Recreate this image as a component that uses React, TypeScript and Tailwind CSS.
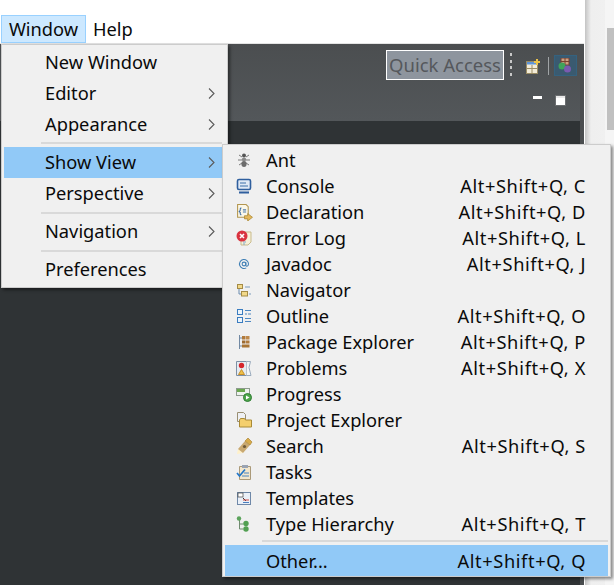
import React from 'react';

const AntIcon = () => (
  <svg width="16" height="16" viewBox="0 0 16 16" fill="none" stroke="#7a7a7a" strokeWidth="1">
    <path d="M3 3l3 2M13 3l-3 2M2 8h4M14 8h-4M3 13l3-2M13 13l-3-2" />
    <circle cx="8" cy="3.5" r="2" fill="#555" stroke="none" />
    <ellipse cx="8" cy="7.5" rx="2.2" ry="2" fill="#8a8a8a" stroke="none" />
    <ellipse cx="8" cy="12" rx="2.6" ry="3" fill="#6c6c6c" stroke="none" />
  </svg>
);

const ConsoleIcon = () => (
  <svg width="16" height="16" viewBox="0 0 16 16" fill="none">
    <rect x="1.5" y="1.5" width="13" height="10" rx="1.5" fill="#dfe9f5" stroke="#2f5f9e" strokeWidth="1.6" />
    <path d="M4 5h6M4 8h8" stroke="#3b6ea8" />
    <path d="M3 14.5h10" stroke="#2f5f9e" strokeWidth="2" />
  </svg>
);

const DeclarationIcon = () => (
  <svg width="17" height="17" viewBox="0 0 16 16" fill="none">
    <path d="M1.5 .5h8l2 2v10h-10z" fill="#fbf7e8" stroke="#b3964f" />
    <path d="M5 3.500L4 4.500V6L3 7l1 1v1.500l1 1" stroke="#3f6ea5" />
    <path d="M6.500 5.500h3M6.500 7.500h3" stroke="#4f7cab" />
    <path d="M8 11h3V9l4.500 3.500L11 16v-2H8z" fill="#e5b95c" stroke="#a9852f" strokeWidth=".7" />
  </svg>
);

const ErrorLogIcon = () => (
  <svg width="16" height="16" viewBox="0 0 16 16" fill="none">
    <path d="M5 2h10v10l-3 3H5z" fill="#f6f0d8" stroke="#c9bb8c" />
    <path d="M7 12h3M7 14h2" stroke="#7ea7c9" />
    <circle cx="6" cy="6" r="5.5" fill="#d9333f" />
    <path d="M4 4l4 4M8 4l-4 4" stroke="#fff" strokeWidth="1.6" />
  </svg>
);

const JavadocIcon = () => (
  <svg width="12" height="12" viewBox="0 0 16 16" fill="none" stroke="#3f7fb5">
    <circle cx="8" cy="8" r="2.500" strokeWidth="1.400" />
    <path d="M10.500 5.500v4q0 1.500 1.500 1.500 2-.5 2-3a6 6 0 1 0-3 5.200" strokeWidth="1.400" />
  </svg>
);

const NavigatorIcon = () => (
  <svg width="16" height="16" viewBox="0 0 16 16" fill="none">
    <rect x="1.500" y="2.500" width="5" height="4" fill="#f2d98a" stroke="#a48b46" />
    <path d="M3 7v5h2" stroke="#6d8db0" />
    <rect x="5.500" y="9.500" width="6" height="4.500" fill="#f2d98a" stroke="#a48b46" />
    <path d="M9 5h5M13 12h2" stroke="#7d9cbc" />
  </svg>
);

const OutlineIcon = () => (
  <svg width="16" height="16" viewBox="0 0 16 16" fill="none">
    <rect x="1.500" y="1.500" width="5" height="5" fill="#eaf3fb" stroke="#3a7cc0" />
    <rect x="1.500" y="9.500" width="5" height="5" fill="#eaf3fb" stroke="#3a7cc0" />
    <path d="M9 2.500h6M9 6h2M12 6h3M9 10.500h6M9 13.500h6" stroke="#4c87c2" />
  </svg>
);

const PackageIcon = () => (
  <svg width="16" height="16" viewBox="0 0 16 16" fill="none">
    <path d="M3.500 1v14M3.500 4h3M3.500 12h3" stroke="#7289a3" />
    <rect x="6" y="2" width="3.500" height="3.500" fill="#b07a3c" />
    <rect x="10" y="2" width="3.500" height="3.500" fill="#c08a4c" />
    <rect x="6" y="6.500" width="3.500" height="3" fill="#9c6a30" />
    <rect x="10" y="6.500" width="3.500" height="3" fill="#b07a3c" />
    <rect x="6" y="10.500" width="7.500" height="3" fill="#a87434" />
  </svg>
);

const ProblemsIcon = () => (
  <svg width="16" height="16" viewBox="0 0 16 16" fill="none">
    <path d="M.5 1.500h10v14H.5z" fill="#e6ecf2" stroke="#7d90a5" />
    <path d="M10.500 1.500h4l-1.500 6 2 8h-4.500" fill="#f2f5f8" stroke="#9aabbd" />
    <circle cx="5.500" cy="5.500" r="2.700" fill="#d5252d" />
    <path d="M5.500 9.500l3 5h-6z" fill="#eec14a" stroke="#c8902a" />
  </svg>
);

const ProgressIcon = () => (
  <svg width="16" height="16" viewBox="0 0 16 16" fill="none">
    <rect x=".5" y="2.500" width="13" height="7" fill="#eef2ee" stroke="#8d9a8d" />
    <rect x="1" y="3" width="8" height="3" fill="#6aa84f" />
    <circle cx="11.500" cy="11.500" r="4" fill="#4ea64a" stroke="#2f7d33" />
    <path d="M10 9.500l3.500 2-3.500 2z" fill="#fff" />
  </svg>
);

const ProjectIcon = () => (
  <svg width="16" height="16" viewBox="0 0 16 16" fill="none">
    <path d="M1.500 .5h6l2 2v7h-8z" fill="#eef0f4" stroke="#9a8f72" />
    <path d="M3.500 8v7h12V8h-6l-1-1.500h-4z" fill="#f4cf6d" stroke="#a98a36" />
  </svg>
);

const SearchIcon = () => (
  <svg width="17" height="17" viewBox="0 0 17 17" fill="none">
    <path d="M1 16l1-5 5 4z" fill="#fff1c9" />
    <path d="M2 11l7-8 5 4-7 8z" fill="#c9a971" />
    <path d="M9 3l3-3 4 4-2 3z" fill="#d8ab4a" stroke="#a37c2a" strokeWidth=".6" />
    <circle cx="8.500" cy="8.500" r="1.600" fill="#6f5a38" />
  </svg>
);

const TasksIcon = () => (
  <svg width="16" height="16" viewBox="0 0 16 16" fill="none">
    <path d="M3.500 2.500h11v13h-11z" fill="#f3e7cd" stroke="#ab9a79" />
    <rect x="6" y="1" width="6" height="3" fill="#9aa4b3" />
    <path d="M1 9l2.500 3L9 5.500" stroke="#2377c9" strokeWidth="1.700" />
    <path d="M8 9h5M6 12h7" stroke="#4d86c0" />
  </svg>
);

const TemplatesIcon = () => (
  <svg width="16" height="16" viewBox="0 0 16 16" fill="none">
    <rect x="1.500" y="2.500" width="13" height="12" fill="#eaf0f8" stroke="#6f88a8" />
    <rect x="2" y="3" width="5" height="4" fill="#fff" stroke="#444" strokeWidth=".7" />
    <path d="M7 8l3 3" stroke="#333" />
    <path d="M7 10h6" stroke="#d24a43" />
    <path d="M7 12.500h6" stroke="#4a7fbe" />
  </svg>
);

const TypeIcon = () => (
  <svg width="16" height="16" viewBox="0 0 16 16" fill="none">
    <path d="M3.500 3v10h4M3.500 8h4" stroke="#6f8b6f" />
    <circle cx="3" cy="2.500" r="2.200" fill="#5ca45c" />
    <circle cx="10" cy="7.500" r="2.700" fill="#53a053" />
    <circle cx="10" cy="13" r="2.700" fill="#53a053" />
  </svg>
);

const Chevron = () => (
  <svg width="7" height="11" viewBox="0 0 7 11" fill="none" stroke="#5a5a5a" strokeWidth="1.100">
    <path d="M1 .5l5 5-5 5" />
  </svg>
);

const Separator = ({ className }: { className: string }) => (
  <div className={`h-[2px] bg-[#d9d9d9] ${className}`} />
);

const MainItem = ({ label, arrow, active }: { label: string; arrow?: boolean; active?: boolean }) => (
  <div className={`h-[31px] flex items-center justify-between pl-[41px] pr-[7px] ${active ? 'bg-[#91c9f7]' : ''}`}>
    <span className="-mt-[2px]">{label}</span>
    {arrow && <Chevron />}
  </div>
);

const views: { label: string; icon: React.ReactNode; keys?: string }[] = [
  { label: 'Ant', icon: <AntIcon /> },
  { label: 'Console', icon: <ConsoleIcon />, keys: 'Alt+Shift+Q, C' },
  { label: 'Declaration', icon: <DeclarationIcon />, keys: 'Alt+Shift+Q, D' },
  { label: 'Error Log', icon: <ErrorLogIcon />, keys: 'Alt+Shift+Q, L' },
  { label: 'Javadoc', icon: <JavadocIcon />, keys: 'Alt+Shift+Q, J' },
  { label: 'Navigator', icon: <NavigatorIcon /> },
  { label: 'Outline', icon: <OutlineIcon />, keys: 'Alt+Shift+Q, O' },
  { label: 'Package Explorer', icon: <PackageIcon />, keys: 'Alt+Shift+Q, P' },
  { label: 'Problems', icon: <ProblemsIcon />, keys: 'Alt+Shift+Q, X' },
  { label: 'Progress', icon: <ProgressIcon /> },
  { label: 'Project Explorer', icon: <ProjectIcon /> },
  { label: 'Search', icon: <SearchIcon />, keys: 'Alt+Shift+Q, S' },
  { label: 'Tasks', icon: <TasksIcon /> },
  { label: 'Templates', icon: <TemplatesIcon /> },
  { label: 'Type Hierarchy', icon: <TypeIcon />, keys: 'Alt+Shift+Q, T' },
];

const App: React.FC = () => {
  return (
    <div className="relative w-[614px] h-[585px] overflow-hidden bg-white flex text-[18.25px] leading-[26px] text-[#0a0a0a] font-['Noto_Sans','Open_Sans',sans-serif]">
      <div className="w-[584px] flex flex-col">
        <div className="h-[44px] pt-[15px] flex items-stretch pl-[1px] border-b border-[#e4e4e4]">
          <div className="w-[85px] border border-[#99d1ff] bg-[#cce8ff] flex items-center justify-center">Window</div>
          <div className="px-[7px] flex items-center">Help</div>
        </div>
        <div className="flex-1 flex bg-[#4a4d4f]">
          <div className="flex-1 flex flex-col bg-[#2f3335]">
            <div className="h-[77px] bg-gradient-to-b from-[#4b4e50] to-[#53575a]" />
          </div>
          <div className="w-[4px] bg-gradient-to-b from-[#4b4e50] to-[#4a4d4f]" />
        </div>
      </div>
      <div className="flex-1 flex">
        <div className="w-[1px] bg-white" />
        <div className="w-[20px] bg-gradient-to-r from-[#c4c4c4] via-[#efefef] via-30% to-[#f0f0f0]" />
        <div className="flex-1 bg-[#f5f5f5]">
          <div className="mt-[28px] ml-[2px] h-[102px] bg-[#c0c0c0]" />
        </div>
      </div>

      {/* perspective toolbar over the workbench */}
      <div className="absolute left-[386px] top-[50px] w-[198px] flex items-start">
        <div className="w-[118px] h-[30px] border border-white bg-[#8e959e] text-[#55585c] text-[18.5px] flex items-center pl-[2px] overflow-hidden whitespace-nowrap">Quick Access</div>
        <div className="ml-[6px] mt-[3px] w-[2px] h-[23px] flex flex-col justify-between">
          <span className="h-[3px] bg-[#c8c8c8]" />
          <span className="h-[3px] bg-[#c8c8c8]" />
          <span className="h-[3px] bg-[#c8c8c8]" />
          <span className="h-[3px] bg-[#c8c8c8]" />
        </div>
        <div className="ml-[14px] mt-[9px] flex">
          <svg width="14" height="15" viewBox="0 0 14 15" fill="none">
            <rect x=".5" y="2.500" width="11" height="12" fill="#f3ecd8" stroke="#9a8c63" />
            <rect x="1" y="3" width="10" height="2.500" fill="#5c93d8" />
            <path d="M6 6v8M1 9.500h10" stroke="#9a8c63" />
            <path d="M11 0v6M8 3h6" stroke="#e9c24a" strokeWidth="2" />
          </svg>
        </div>
        <div className="ml-[8px] mt-[7px] w-[1px] h-[18px] bg-[#a0a4a6]" />
        <div className="ml-[5px] mt-[5px] w-[23px] h-[21px] bg-[#3a5a70] border border-[#34627f] flex items-center justify-center">
          <svg width="15" height="15" viewBox="0 0 15 15" fill="none">
            <rect x="3" y="0" width="8" height="7" fill="#c9a183" stroke="#7a3f2e" />
            <path d="M7 0v7M3 3.500h8" stroke="#7a3f2e" />
            <circle cx="4" cy="8" r="3.500" fill="#3fa35b" />
            <circle cx="9.500" cy="11" r="3.500" fill="#7a5ab0" />
          </svg>
        </div>
      </div>
      <div className="absolute left-[533px] top-[96px] flex items-start gap-[14px]">
        <span className="w-[9px] h-[3px] bg-white" />
        <span className="w-[9px] h-[9px] bg-white border-t-2 border-[#e8e8e8] shadow-[0_0_0_1px_#6a6d6f]" />
      </div>

      {/* Window menu */}
      <div className="absolute left-[1px] top-[44px] w-[227px] h-[244px] bg-[#f0f0f0] border border-[#cccccc] shadow-[2px_2px_3px_rgba(0,0,0,0.45)] pl-[2px] pt-[2px] pr-[5px]">
        <MainItem label="New Window" />
        <MainItem label="Editor" arrow />
        <MainItem label="Appearance" arrow />
        <Separator className="ml-[37px] mt-[2px] mb-[3px]" />
        <MainItem label="Show View" arrow active />
        <MainItem label="Perspective" arrow />
        <Separator className="ml-[37px] mt-[3px] mb-[2px]" />
        <MainItem label="Navigation" arrow />
        <Separator className="ml-[37px] mt-[3px] mb-[2px]" />
        <MainItem label="Preferences" />
      </div>

      {/* Show View submenu */}
      <div className="absolute left-[222px] top-[144px] w-[389px] h-[433px] bg-[#f0f0f0] border border-[#cccccc] shadow-[2px_2px_3px_rgba(0,0,0,0.45)] pl-[2px] pr-[2px] pt-[2px]">
        {views.map(v => (
          <div key={v.label} className="h-[26px] flex items-center pr-[22px]">
            <div className="w-[41px] h-[17px] flex items-center justify-center pr-[3px]">{v.icon}</div>
            <span className="flex-1">{v.label}</span>
            {v.keys && <span className="tracking-[0.6px]">{v.keys}</span>}
          </div>
        ))}
        <Separator className="ml-[37px] mt-[3px] mb-[3px]" />
        <div className="h-[31px] flex items-center pr-[22px] pl-[41px] bg-[#91c9f7]">
          <span className="flex-1">Other...</span>
          <span className="tracking-[0.6px]">Alt+Shift+Q, Q</span>
        </div>
      </div>
    </div>
  );
};

export default App;
